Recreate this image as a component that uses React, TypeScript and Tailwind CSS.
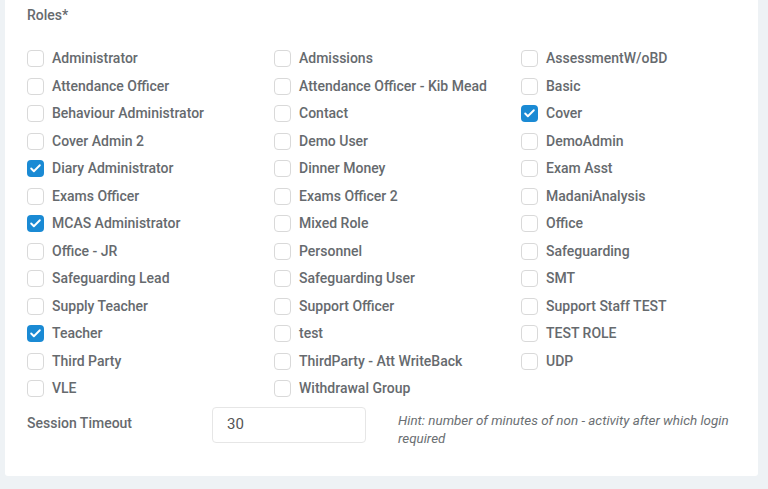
import { Check } from 'lucide-react';

const roles: [string, boolean][] = [
  ['Administrator', false], ['Admissions', false], ['AssessmentW/oBD', false],
  ['Attendance Officer', false], ['Attendance Officer - Kib Mead', false], ['Basic', false],
  ['Behaviour Administrator', false], ['Contact', false], ['Cover', true],
  ['Cover Admin 2', false], ['Demo User', false], ['DemoAdmin', false],
  ['Diary Administrator', true], ['Dinner Money', false], ['Exam Asst', false],
  ['Exams Officer', false], ['Exams Officer 2', false], ['MadaniAnalysis', false],
  ['MCAS Administrator', true], ['Mixed Role', false], ['Office', false],
  ['Office - JR', false], ['Personnel', false], ['Safeguarding', false],
  ['Safeguarding Lead', false], ['Safeguarding User', false], ['SMT', false],
  ['Supply Teacher', false], ['Support Officer', false], ['Support Staff TEST', false],
  ['Teacher', true], ['test', false], ['TEST ROLE', false],
  ['Third Party', false], ['ThirdParty - Att WriteBack', false], ['UDP', false],
  ['VLE', false], ['Withdrawal Group', false],
];

function RoleCheckbox({ label, checked }: { label: string; checked: boolean }) {
  return (
    <label className="flex items-center gap-2 h-[27.5px]">
      {checked ? (
        <span className="flex items-center justify-center w-[17px] h-[17px] rounded-[4px] bg-[#1a8ad4]">
          <Check className="w-[13px] h-[13px] text-white" strokeWidth={3.5} />
        </span>
      ) : (
        <span className="w-[17px] h-[17px] rounded-[4px] border border-[#d9d9d9] bg-white" />
      )}
      <span className="text-[14px] font-medium text-[#666a6e] whitespace-nowrap">{label}</span>
    </label>
  );
}

export default function App() {
  return (
    <div
      className="w-[768px] h-[489px] bg-[#eef2f5] pl-[5px] pr-[10px] overflow-hidden"
      style={{ fontFamily: 'Roboto, "Liberation Sans", sans-serif' }}
    >
      <div className="bg-white h-[476px] rounded-b-[3px] pl-[22px] pt-[5px]">
        {/* Roles */}
        <div className="text-[14px] font-medium text-[#666a6e] h-[20px] leading-[20px]">Roles*</div>
        <div className="grid grid-cols-[247px_247px_247px] mt-[20px]">
          {roles.map(([label, checked]) => (
            <RoleCheckbox key={label} label={label} checked={checked} />
          ))}
        </div>

        {/* Session timeout */}
        <div className="flex items-start mt-[4px]">
          <div className="w-[185px] pt-[6px] text-[14px] font-medium text-[#666a6e]">Session Timeout</div>
          <div className="w-[154px] h-[36px] border border-[#e6e6e6] rounded-[4px] flex items-center px-[14px] text-[15px] text-[#555]">
            30
          </div>
          <div className="ml-[32px] w-[350px] pt-[5px] text-[13.4px] italic leading-[18px] text-[#6b6f73]">
            Hint: number of minutes of non - activity after which login required
          </div>
        </div>
      </div>
    </div>
  );
}
